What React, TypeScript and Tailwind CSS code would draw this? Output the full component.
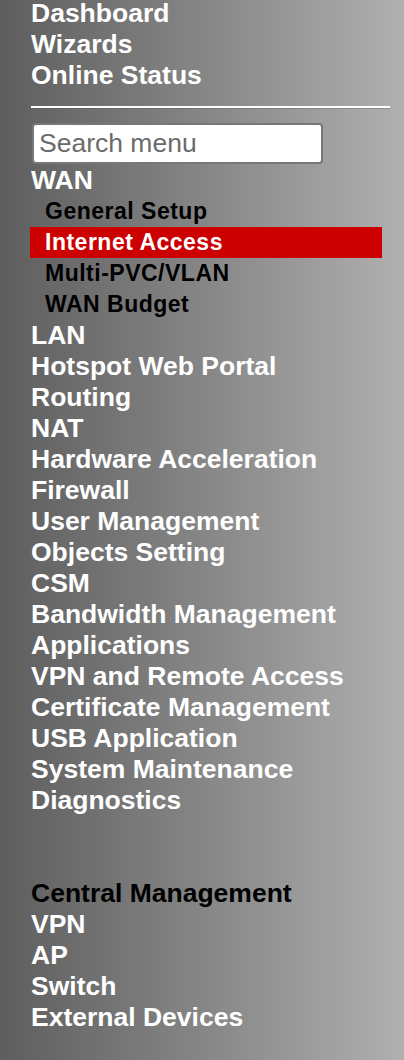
import React, { useState } from 'react';

const topItems = ['Dashboard', 'Wizards', 'Online Status'];

const wanSub = ['General Setup', 'Internet Access', 'Multi-PVC/VLAN', 'WAN Budget'];

const mainItems = [
  'LAN',
  'Hotspot Web Portal',
  'Routing',
  'NAT',
  'Hardware Acceleration',
  'Firewall',
  'User Management',
  'Objects Setting',
  'CSM',
  'Bandwidth Management',
  'Applications',
  'VPN and Remote Access',
  'Certificate Management',
  'USB Application',
  'System Maintenance',
  'Diagnostics',
];

const centralItems = ['VPN', 'AP', 'Switch', 'External Devices'];

const MainLink: React.FC<{ label: string }> = ({ label }) => (
  <a href="#" className="block h-[31px] leading-[31px] text-[26.5px] font-bold text-white whitespace-nowrap">
    {label}
  </a>
);

const App: React.FC = () => {
  const [query, setQuery] = useState('');
  const active = 'Internet Access';

  return (
    <div
      className="min-h-[1060px] w-[404px] overflow-hidden bg-gradient-to-r from-[#5e5e5e] to-[#b0b0b0]"
      style={{ fontFamily: '"Liberation Sans", Arial, Helvetica, sans-serif' }}
    >
      <nav className="-mt-[2px] pl-[31px] pr-[14px]">
        {topItems.map((item) => (
          <MainLink key={item} label={item} />
        ))}

        <hr className="mt-[15px] mb-[15px] border-0 h-[2px] bg-white shadow-[0_1px_0_rgba(80,80,80,0.3)]" />

        <input
          type="text"
          value={query}
          onChange={(e) => setQuery(e.target.value)}
          placeholder="Search menu"
          className="block w-[291px] h-[41px] ml-px px-[5px] bg-white border-2 border-[#777] rounded-[4px] text-[26.5px] text-black placeholder:text-[#6b6b6b] outline-none"
        />

        <div className="mt-px">
          <MainLink label="WAN" />
          <ul className="mr-[8px] -ml-px">
            {wanSub.map((item) => (
              <li key={item}>
                <a
                  href="#"
                  className={`block h-[31px] leading-[31px] pl-[15px] text-[23px] font-bold tracking-[0.5px] whitespace-nowrap ${
                    item === active ? 'bg-[#cc0000] text-white' : 'text-black'
                  }`}
                >
                  {item}
                </a>
              </li>
            ))}
          </ul>
          {mainItems.map((item) => (
            <MainLink key={item} label={item} />
          ))}
        </div>

        <div className="mt-[62px]">
          <div className="h-[31px] leading-[31px] text-[26.5px] font-bold text-black whitespace-nowrap">
            Central Management
          </div>
          {centralItems.map((item) => (
            <MainLink key={item} label={item} />
          ))}
        </div>
      </nav>
    </div>
  );
};

export default App;
